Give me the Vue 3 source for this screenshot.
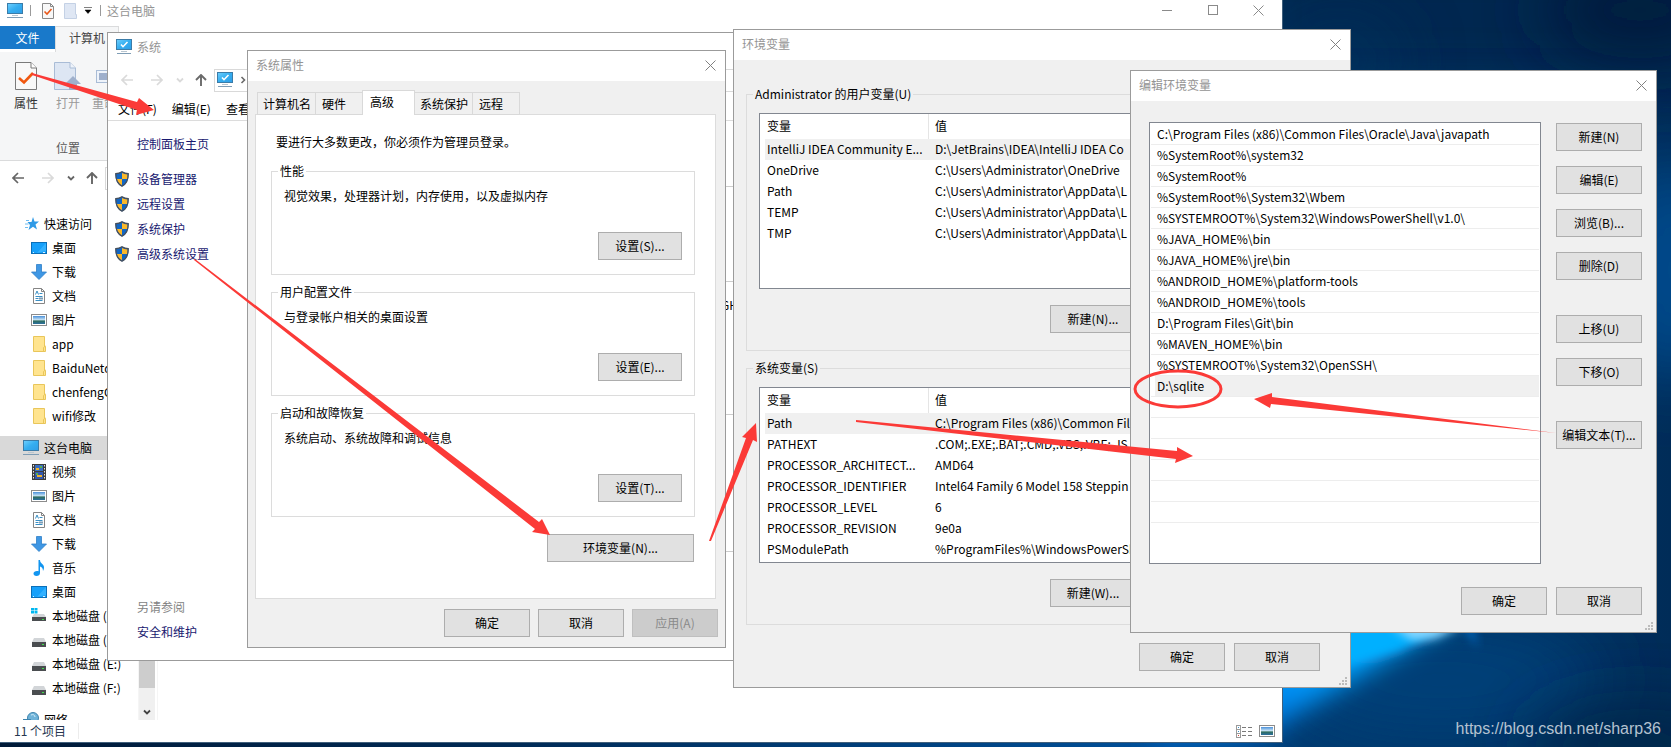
<!-- Desktop with the windows to walk through for adding a folder to Path -->
<script setup>
import { ref } from 'vue'

const quickAccess = [
  { icon: 'desktop', label: '桌面' },
  { icon: 'download', label: '下载' },
  { icon: 'doc', label: '文档' },
  { icon: 'picture', label: '图片' },
  { icon: 'folder', label: 'app' },
  { icon: 'folder', label: 'BaiduNetdisk' },
  { icon: 'folder', label: 'chenfengCode' },
  { icon: 'folder', label: 'wifi修改' },
]

const thisPc = [
  { icon: 'video', label: '视频' },
  { icon: 'picture', label: '图片' },
  { icon: 'doc', label: '文档' },
  { icon: 'download', label: '下载' },
  { icon: 'music', label: '音乐' },
  { icon: 'desktop', label: '桌面' },
  { icon: 'osdisk', label: '本地磁盘 (C:)' },
  { icon: 'disk', label: '本地磁盘 (D:)' },
  { icon: 'disk', label: '本地磁盘 (E:)' },
  { icon: 'disk', label: '本地磁盘 (F:)' },
]

const systemLinks = ['设备管理器', '远程设置', '系统保护', '高级系统设置']

const tabs = ['计算机名', '硬件', '高级', '系统保护', '远程']
const activeTab = ref('高级')

const propertyGroups = [
  { title: '性能', text: '视觉效果，处理器计划，内存使用，以及虚拟内存', button: '设置(S)...' },
  { title: '用户配置文件', text: '与登录帐户相关的桌面设置', button: '设置(E)...' },
  { title: '启动和故障恢复', text: '系统启动、系统故障和调试信息', button: '设置(T)...' },
]

const variableGroups = ref([
  {
    title: 'Administrator 的用户变量(U)',
    selected: 0,
    rows: [
      ['IntelliJ IDEA Community E...', 'D:\\JetBrains\\IDEA\\IntelliJ IDEA Co'],
      ['OneDrive', 'C:\\Users\\Administrator\\OneDrive'],
      ['Path', 'C:\\Users\\Administrator\\AppData\\L'],
      ['TEMP', 'C:\\Users\\Administrator\\AppData\\L'],
      ['TMP', 'C:\\Users\\Administrator\\AppData\\L'],
    ],
    buttons: ['新建(N)...', '编辑(E)...', '删除(D)'],
  },
  {
    title: '系统变量(S)',
    selected: 0,
    rows: [
      ['Path', 'C:\\Program Files (x86)\\Common Fil'],
      ['PATHEXT', '.COM;.EXE;.BAT;.CMD;.VBS;.VBE;.JS'],
      ['PROCESSOR_ARCHITECT...', 'AMD64'],
      ['PROCESSOR_IDENTIFIER', 'Intel64 Family 6 Model 158 Steppin'],
      ['PROCESSOR_LEVEL', '6'],
      ['PROCESSOR_REVISION', '9e0a'],
      ['PSModulePath', '%ProgramFiles%\\WindowsPowerSh'],
    ],
    buttons: ['新建(W)...', '编辑(I)...', '删除(L)'],
  },
])

const paths = [
  'C:\\Program Files (x86)\\Common Files\\Oracle\\Java\\javapath',
  '%SystemRoot%\\system32',
  '%SystemRoot%',
  '%SystemRoot%\\System32\\Wbem',
  '%SYSTEMROOT%\\System32\\WindowsPowerShell\\v1.0\\',
  '%JAVA_HOME%\\bin',
  '%JAVA_HOME%\\jre\\bin',
  '%ANDROID_HOME%\\platform-tools',
  '%ANDROID_HOME%\\tools',
  'D:\\Program Files\\Git\\bin',
  '%MAVEN_HOME%\\bin',
  '%SYSTEMROOT%\\System32\\OpenSSH\\',
  'D:\\sqlite',
  '', '', '', '', '', '', '',
]
const selectedPath = ref(12)

const pathButtons = [
  ['新建(N)', '编辑(E)', '浏览(B)...', '删除(D)'],
  ['上移(U)', '下移(O)'],
  ['编辑文本(T)...'],
]
</script>

<template>
  <main class="desktop">
    <svg class="wallpaper" viewBox="0 0 1671 747" preserveAspectRatio="none" aria-hidden="true">
      <defs>
        <linearGradient id="night" x1="0" x2="1" y1="0" y2="0">
          <stop offset="0" stop-color="#001a38" />
          <stop offset=".3" stop-color="#002a55" />
          <stop offset=".7" stop-color="#00509a" />
          <stop offset=".78" stop-color="#003a70" />
          <stop offset="1" stop-color="#002c58" />
        </linearGradient>
        <linearGradient id="beam" x1="1" x2="0" y1="0" y2="1">
          <stop offset="0" stop-color="#27b4ff" />
          <stop offset=".45" stop-color="#00a0ff" />
          <stop offset=".75" stop-color="#0078e0" />
          <stop offset="1" stop-color="#0058ac" />
        </linearGradient>
        <filter id="soft" x="-20%" y="-40%" width="140%" height="180%">
          <feGaussianBlur stdDeviation="13" />
        </filter>
        <filter id="softer" x="-60%" y="-80%" width="220%" height="260%">
          <feGaussianBlur stdDeviation="34" />
        </filter>
        <filter id="tight" x="-40%" y="-60%" width="180%" height="220%">
          <feGaussianBlur stdDeviation="5" />
        </filter>
      </defs>
      <rect width="1671" height="747" fill="url(#night)" />
      <rect x="1240" y="-60" width="500" height="150" fill="#00284f" filter="url(#softer)" />
      <ellipse cx="1340" cy="60" rx="60" ry="40" fill="#003462" opacity=".6" filter="url(#softer)" />
      <ellipse cx="1640" cy="10" rx="100" ry="50" fill="#001d3c" filter="url(#softer)" />
      <ellipse cx="1671" cy="270" rx="70" ry="110" fill="#00488a" filter="url(#softer)" />
      <ellipse cx="1440" cy="680" rx="160" ry="60" fill="#004078" filter="url(#softer)" />
      <ellipse cx="1640" cy="747" rx="110" ry="40" fill="#00254a" filter="url(#softer)" />
      <polygon points="1460,614 1200,600 1150,747 1262,735" fill="url(#beam)" filter="url(#soft)" />
      <polygon points="1465,615 1300,615 1320,672 1400,650" fill="#00b0ff" filter="url(#tight)" />
      <polygon points="1462,626 1390,626 1412,640 1436,638" fill="#8fd8ff" filter="url(#tight)" />
      <polygon points="1464,626 1472,626 1478,648" fill="#0a7ade" filter="url(#tight)" />
    </svg>

    <svg class="symbols" width="0" height="0" aria-hidden="true">
      <defs>
        <linearGradient id="screen" x1="0" x2="1" y1="0" y2="1">
          <stop offset="0" stop-color="#6fd0ff" />
          <stop offset=".5" stop-color="#35aef0" />
          <stop offset="1" stop-color="#2f9de6" />
        </linearGradient>
        <linearGradient id="sea" x1="0" x2="0" y1="0" y2="1">
          <stop offset="0" stop-color="#4a90d9" />
          <stop offset=".5" stop-color="#cfe8f7" />
          <stop offset=".6" stop-color="#2f6d5c" />
          <stop offset="1" stop-color="#2c6fa0" />
        </linearGradient>
      </defs>
      <symbol id="monitor" viewBox="0 0 16 16">
        <rect x=".5" y=".5" width="15" height="10" fill="url(#screen)" stroke="#3b7ca8" />
        <path d="M5 12.500h6" stroke="#b9c6d0" />
        <path d="M0 14.500h16" stroke="#7f9db5" />
      </symbol>
      <symbol id="monitor-check" viewBox="0 0 16 16">
        <rect x=".5" y=".5" width="15" height="10" fill="url(#screen)" stroke="#3b7ca8" />
        <path d="M5 5.500l2 2.200L11.500 3" fill="none" stroke="#fff" stroke-width="1.600" />
        <path d="M5 12.500h6" stroke="#b9c6d0" />
        <path d="M1 14.500h14" stroke="#7f9db5" />
      </symbol>
      <symbol id="page-check" viewBox="0 0 22 28">
        <path d="M.5.5H16l5.500 5.500v21.500H.5z" fill="#f8f8f8" stroke="#7a7a7a" />
        <path d="M16 .5V6h5.500" fill="#fff" stroke="#7a7a7a" />
        <path d="M4 16l5 4.500L18 11" fill="none" stroke="#f0570f" stroke-width="2.600" />
      </symbol>
      <symbol id="page-check-small" viewBox="0 0 12 16">
        <path d="M.5.500h8l3 3v12H.5z" fill="#f8f8f8" stroke="#8a8a8a" />
        <path d="M8.500.500v3h3" fill="none" stroke="#8a8a8a" />
        <path d="M2.500 8.500L5 11l4.500-5" fill="none" stroke="#e8581a" stroke-width="1.600" />
      </symbol>
      <symbol id="page-open" viewBox="0 0 28 28">
        <path d="M.5.5H16l5.500 5.500v21.500H.5z" fill="#dde6f3" stroke="#a9bcd6" />
        <path d="M16 .5V6h5.500" fill="#eef3fa" stroke="#a9bcd6" />
        <path d="M19 14l8 8h-4v6h-8v-6h-4z" fill="#9fb0cc" />
      </symbol>
      <symbol id="rename" viewBox="0 0 28 28">
        <rect x=".5" y="8.500" width="27" height="12" fill="#eef3fa" stroke="#a9bcd6" />
        <rect x="3" y="11" width="14" height="7" fill="#9fb0cc" />
      </symbol>
      <symbol id="page-new" viewBox="0 0 13 16">
        <path d="M.5.5h11v11h1v4H.5z" fill="#dfe7f4" stroke="#c4d1e5" />
      </symbol>
      <symbol id="arrow-left" viewBox="0 0 12 12">
        <path d="M12 6H1M6 1L1 6l5 5" fill="none" stroke="currentColor" stroke-width="1.700" />
      </symbol>
      <symbol id="arrow-right" viewBox="0 0 12 12">
        <path d="M0 6h11M6 1l5 5-5 5" fill="none" stroke="currentColor" stroke-width="1.700" />
      </symbol>
      <symbol id="arrow-up" viewBox="0 0 12 12">
        <path d="M6 12V1M1 6l5-5 5 5" fill="none" stroke="currentColor" stroke-width="1.900" />
      </symbol>
      <symbol id="chevron-down" viewBox="0 0 8 8">
        <path d="M1 2.500l3 3 3-3" fill="none" stroke="currentColor" stroke-width="1.800" />
      </symbol>
      <symbol id="chevron-right" viewBox="0 0 8 8">
        <path d="M2.500 1l3 3-3 3" fill="none" stroke="currentColor" stroke-width="1.600" />
      </symbol>
      <symbol id="close" viewBox="0 0 11 11">
        <path d="M.5.5l10 10M10.500.5l-10 10" fill="none" stroke="currentColor" />
      </symbol>
      <symbol id="star" viewBox="0 0 14 14">
        <path d="M8 0l1.500 4.500H14l-3.500 3L12 12.500 8 9.800 3.500 13 5 8 2.500 5h4z" fill="#2f9ae6" />
        <path d="M1 3.500h3M0 7h3.500M0 10.500h3" stroke="#6fbcf0" />
      </symbol>
      <symbol id="desktop" viewBox="0 0 16 16">
        <rect x=".5" y="2.500" width="15" height="11" fill="#16a0fa" stroke="#0b6fb8" />
        <path d="M15 3v8L6 13z" fill="#33b1ff" />
        <path d="M2 12.500h1M12 12.500h2" stroke="#d4efff" />
      </symbol>
      <symbol id="download" viewBox="0 0 16 16">
        <path d="M5.500.5h5V8h5L8 15.500.5 8h5z" fill="#3f97e4" stroke="#2f7fc8" stroke-width=".8" />
      </symbol>
      <symbol id="doc" viewBox="0 0 16 16">
        <path d="M2.500.5h8l3 3v12h-11z" fill="#fff" stroke="#858585" />
        <path d="M10.500.5v3h3" fill="none" stroke="#858585" />
        <path d="M4.500 6.500l1.500-3.500 1.500 3.500M8.500 5.500h3M4.500 8.500h7M4.500 10.500h3M4.500 12.500h7" fill="none" stroke="#3a8fc4" />
        <rect x="8" y="9.500" width="4" height="2" fill="#7f9db5" />
      </symbol>
      <symbol id="picture" viewBox="0 0 16 16">
        <rect x=".5" y="2.500" width="15" height="11" fill="#fff" stroke="#8c8c8c" />
        <rect x="2" y="4" width="12" height="8" fill="url(#sea)" />
      </symbol>
      <symbol id="folder" viewBox="0 0 16 16">
        <path d="M2.500.5h11v10h1v5h-12z" fill="#ffe48f" stroke="#e9c65a" />
        <path d="M12.500 15.500v-4l2-1.500" fill="none" stroke="#e9c65a" />
      </symbol>
      <symbol id="video" viewBox="0 0 16 16">
        <rect x="1" y="0" width="14" height="16" fill="#3d3d3d" />
        <path d="M2.500 1v15M13.500 1v15" stroke="#e8e8e8" stroke-dasharray="1.500 1.500" />
        <rect x="4" y="1" width="8" height="6" fill="#3a6fc0" />
        <rect x="4" y="8" width="8" height="7" fill="#3358b0" />
        <path d="M5 5h3M6 12h5" stroke="#f0b429" stroke-width="2" />
        <path d="M9 3h2M5 10h2" stroke="#59b04c" stroke-width="2" />
      </symbol>
      <symbol id="music" viewBox="0 0 16 16">
        <path d="M7.500 0h1.500c0 3.500 4 4 4 7.500 0 1.500-.5 2.500-1 3.500 0-3-1.500-4-3-4.500V13c0 1.700-1.500 3-3.500 3S2.500 15 2.500 13.500 4 11 6 11c.600 0 1 0 1.500.300z" fill="#1295f0" />
      </symbol>
      <symbol id="disk" viewBox="0 0 16 16">
        <path d="M3 6h10l2 4H1z" fill="#d2d5d8" />
        <rect x="1" y="10" width="14" height="5" fill="#4a4d50" />
        <rect x="11" y="12" width="2" height="1" fill="#3fe04a" />
      </symbol>
      <symbol id="osdisk" viewBox="0 0 16 16">
        <path d="M0 0h3v2.500H0zM3.500 0h3v2.500h-3zM0 3h3v2.500H0zM3.500 3h3v2.500h-3z" fill="#00b7f0" />
        <path d="M3 6h10l2 3H1z" fill="#d2d5d8" />
        <rect x="1" y="9" width="14" height="4" fill="#4a4d50" />
        <rect x="11" y="11" width="2" height="1" fill="#3fe04a" />
      </symbol>
      <symbol id="network" viewBox="0 0 16 16">
        <circle cx="10" cy="6" r="5.500" fill="#6fb3d9" stroke="#3f84ad" />
        <path d="M8 3c2-1 4 0 4 2" fill="none" stroke="#d5edf8" />
        <path d="M0 7h8v6H0z" fill="#3f84ad" />
      </symbol>
      <symbol id="shield" viewBox="0 0 14 16">
        <path d="M7 .5c2 1.300 4 1.900 6.500 2C13.500 9 12 13 7 15.500 2 13 .5 9 .5 2.500 3 2.400 5 1.800 7 .5z" fill="#2b5fa8" />
        <path d="M7 2v6H1.800C1.500 6.500 1.500 5 1.500 3.500 3.500 3.300 5.300 2.900 7 2z" fill="#1166c4" />
        <path d="M7 2c1.700.9 3.500 1.300 5.500 1.500 0 1.500 0 3-.3 4.500H7z" fill="#fbb829" />
        <path d="M1.800 8H7v6.300C4 12.700 2.400 10.600 1.800 8z" fill="#fbb829" />
        <path d="M7 8h5.200c-.6 2.600-2.200 4.700-5.200 6.300z" fill="#1166c4" />
        <path d="M7 .8c2 1.200 4 1.800 6.300 1.900C13.300 9 11.800 12.800 7 15.200 2.200 12.800.7 9 .7 2.700 3 2.600 5 2 7 .8z" fill="none" stroke="#46505c" stroke-width="1.200" />
      </symbol>
      <symbol id="details" viewBox="0 0 16 13">
        <rect x=".5" y=".5" width="4" height="12" fill="#fff" stroke="#9a9a9a" />
        <path d="M1 4.500h3M1 8.500h3" stroke="#9a9a9a" />
        <path d="M2 2.500h1" stroke="#3a8fc4" />
        <path d="M2 6.500h1" stroke="#3a8fc4" />
        <path d="M2 10.500h1" stroke="#d04a3a" />
        <path d="M6 2.500h4M12 2.500h4M6 6.500h4M12 6.500h4M6 10.500h4M12 10.500h4" stroke="#7a7a7a" />
      </symbol>
      <symbol id="grip" viewBox="0 0 8 8">
        <path d="M6 0h2v2H6zM3 3h2v2H3zM6 3h2v2H6zM0 6h2v2H0zM3 6h2v2H3zM6 6h2v2H6z" fill="#bcbcbc" />
      </symbol>
    </svg>

    <!-- file explorer -->
    <section class="window explorer">
      <header class="explorer-title">
        <svg class="i16"><use href="#monitor" /></svg>
        <i class="bar first"></i>
        <svg class="page"><use href="#page-check-small" /></svg>
        <svg class="new-page"><use href="#page-new" /></svg>
        <svg class="caret" viewBox="0 0 8 7"><path d="M0 .5h8M1 3h6L4 6.500z" stroke="#000" stroke-width=".5" /></svg>
        <i class="bar"></i>
        <span class="caption">这台电脑</span>
        <div class="window-controls">
          <button type="button" aria-label="最小化">
            <svg class="i11" viewBox="0 0 11 11"><path d="M1 5.500h10" stroke="currentColor" /></svg>
          </button>
          <button type="button" aria-label="最大化">
            <svg class="i11" viewBox="0 0 11 11"><rect x="1.500" y=".5" width="9" height="9" fill="none" stroke="currentColor" /></svg>
          </button>
          <button type="button" aria-label="关闭">
            <svg class="i11"><use href="#close" /></svg>
          </button>
        </div>
      </header>
      <nav class="ribbon-tabs">
        <button type="button" class="file-tab">文件</button>
        <button type="button" class="computer-tab">计算机</button>
      </nav>
      <div class="ribbon">
        <div class="ribbon-group">
          <div class="ribbon-buttons">
            <button type="button"><svg class="big"><use href="#page-check" /></svg>属性</button>
            <button type="button" disabled><svg class="big wide"><use href="#page-open" /></svg>打开</button>
            <button type="button" disabled><svg class="big wide"><use href="#rename" /></svg>重命名</button>
          </div>
          <span class="group-name">位置</span>
        </div>
      </div>
      <div class="explorer-nav">
        <svg class="i12"><use href="#arrow-left" /></svg>
        <svg class="i12 faded"><use href="#arrow-right" /></svg>
        <svg class="i8"><use href="#chevron-down" /></svg>
        <svg class="i12"><use href="#arrow-up" /></svg>
        <div class="address"></div>
      </div>
      <div class="explorer-body">
        <ul class="tree">
          <li class="root"><svg class="i14"><use href="#star" /></svg>快速访问</li>
          <li v-for="item in quickAccess" :key="item.label">
            <svg class="i16"><use :href="'#' + item.icon" /></svg>{{ item.label }}
          </li>
          <li class="root spaced current"><svg class="i16"><use href="#monitor" /></svg>这台电脑</li>
          <li v-for="item in thisPc" :key="item.label">
            <svg class="i16"><use :href="'#' + item.icon" /></svg>{{ item.label }}
          </li>
          <li class="root spaced"><svg class="i16"><use href="#network" /></svg>网络</li>
        </ul>
        <div class="scrollbar">
          <div class="thumb"></div>
          <svg class="i8"><use href="#chevron-down" /></svg>
        </div>
      </div>
      <footer class="status">
        <span class="count">11 个项目</span>
        <svg class="details"><use href="#details" /></svg>
        <svg class="i16"><use href="#picture" /></svg>
      </footer>
    </section>

    <!-- control panel: system -->
    <section class="window system">
      <header class="title-bar with-icon">
        <svg class="i16"><use href="#monitor-check" /></svg>
        <span class="caption">系统</span>
      </header>
      <div class="system-nav">
        <svg class="i12 faded"><use href="#arrow-left" /></svg>
        <svg class="i12 faded"><use href="#arrow-right" /></svg>
        <svg class="i8 faded"><use href="#chevron-down" /></svg>
        <svg class="i12"><use href="#arrow-up" /></svg>
        <div class="address">
          <svg class="i16"><use href="#monitor-check" /></svg>
          <svg class="i8"><use href="#chevron-right" /></svg>
        </div>
      </div>
      <nav class="menu">
        <button type="button">文件(F)</button>
        <button type="button">编辑(E)</button>
        <button type="button">查看(V)</button>
      </nav>
      <div class="system-body">
        <aside>
          <a class="home" href="#">控制面板主页</a>
          <a v-for="link in systemLinks" :key="link" href="#">
            <svg class="shield"><use href="#shield" /></svg>{{ link }}
          </a>
          <span class="see-also">另请参阅</span>
          <a class="home" href="#">安全和维护</a>
        </aside>
        <div class="system-info">
          <div class="info-head"></div>
          <div class="info-edition"></div>
          <div class="info-cpu">GHz</div>
          <div class="info-name"></div>
        </div>
      </div>
    </section>

    <!-- system properties -->
    <section class="window properties">
      <header class="title-bar">
        <span class="caption">系统属性</span>
        <button type="button" class="close" aria-label="关闭"><svg class="i11"><use href="#close" /></svg></button>
      </header>
      <div class="properties-body">
        <nav class="tabs">
          <button
            v-for="tab in tabs"
            :key="tab"
            type="button"
            :class="['tab', activeTab === tab ? 'active' : '', tab.length > 2 ? 'long' : '']"
            @click="activeTab = tab"
          >
            {{ tab }}
          </button>
        </nav>
        <div class="panel">
          <p>要进行大多数更改，你必须作为管理员登录。</p>
          <fieldset v-for="group in propertyGroups" :key="group.title">
            <legend>{{ group.title }}</legend>
            <p>{{ group.text }}</p>
            <button type="button" class="btn">{{ group.button }}</button>
          </fieldset>
          <button type="button" class="btn env-button">环境变量(N)...</button>
        </div>
        <div class="actions">
          <button type="button" class="btn">确定</button>
          <button type="button" class="btn">取消</button>
          <button type="button" class="btn" disabled>应用(A)</button>
        </div>
      </div>
    </section>

    <!-- environment variables -->
    <section class="window variables">
      <header class="title-bar">
        <span class="caption">环境变量</span>
        <button type="button" class="close" aria-label="关闭"><svg class="i11"><use href="#close" /></svg></button>
      </header>
      <div class="variables-body">
        <fieldset v-for="group in variableGroups" :key="group.title">
          <legend>{{ group.title }}</legend>
          <div class="table-box">
            <table>
              <thead>
                <tr><th class="name">变量</th><th>值</th></tr>
              </thead>
              <tbody>
                <tr
                  v-for="(row, i) in group.rows"
                  :key="row[0]"
                  :class="{ selected: group.selected === i }"
                  @click="group.selected = i"
                >
                  <td class="name">{{ row[0] }}</td>
                  <td>{{ row[1] }}</td>
                </tr>
              </tbody>
            </table>
          </div>
          <div class="actions">
            <button v-for="label in group.buttons" :key="label" type="button" class="btn">{{ label }}</button>
          </div>
        </fieldset>
        <div class="actions">
          <button type="button" class="btn">确定</button>
          <button type="button" class="btn">取消</button>
        </div>
      </div>
      <svg class="grip"><use href="#grip" /></svg>
    </section>

    <!-- edit Path -->
    <section class="window edit">
      <header class="title-bar">
        <span class="caption">编辑环境变量</span>
        <button type="button" class="close" aria-label="关闭"><svg class="i11"><use href="#close" /></svg></button>
      </header>
      <div class="edit-body">
        <ul class="paths">
          <li v-for="(path, i) in paths" :key="i" :class="{ selected: selectedPath === i }" @click="selectedPath = i">
            <span>{{ path }}</span>
          </li>
        </ul>
        <div class="side">
          <div v-for="(set, i) in pathButtons" :key="i" class="side-set">
            <button v-for="label in set" :key="label" type="button" class="btn">{{ label }}</button>
          </div>
        </div>
      </div>
      <div class="actions">
        <button type="button" class="btn">确定</button>
        <button type="button" class="btn">取消</button>
      </div>
      <svg class="grip"><use href="#grip" /></svg>
    </section>

    <!-- red arrows between the steps -->
    <svg class="marks" aria-hidden="true">
      <g fill="#fb3a37">
        <polygon points="32,73 137,102 139,98 154,110 136,115 137,110 32,75" />
        <polygon points="195,259 539,522 542,519 550,535 532,532 535,529 194,260" />
        <polygon points="709,541 746,438 742,437 756,423 757,442 753,440 711,541" />
        <polygon points="856,420 1177,451 1177,447 1193,456 1175,463 1176,459 856,422" />
        <polygon points="1556,433 1272,397 1272,393 1254,399 1270,408 1271,404" />
      </g>
      <ellipse cx="1178" cy="389" rx="43" ry="18" fill="none" stroke="#fb3a37" stroke-width="3" />
    </svg>

    <span class="watermark">https://blog.csdn.net/sharp36</span>
  </main>
</template>

<style>
body {
  background: #002850;
}
</style>

<style scoped>
.desktop {
  position: relative;
  min-height: 100vh;
  overflow: hidden;
  font: 12px/16px "Noto Sans CJK SC", sans-serif;
  color: #000;
}

.wallpaper,
.marks {
  position: absolute;
  inset: 0;
  width: 100%;
  height: 100%;
}

.marks {
  pointer-events: none;
}

.symbols {
  position: absolute;
}

ul,
p {
  margin: 0;
  padding: 0;
  list-style: none;
}

svg {
  flex: none;
}

button {
  padding: 0;
  border: none;
  background: none;
  font: inherit;
  color: inherit;
  white-space: nowrap;
}

.i8 { width: 8px; height: 8px; }
.i11 { width: 11px; height: 11px; }
.i12 { width: 12px; height: 12px; }
.i14 { width: 14px; height: 14px; }
.i16 { width: 16px; height: 16px; }

.faded {
  color: #dadada;
}

/* windows lie freely on the desktop */
.window {
  position: absolute;
  box-sizing: border-box;
  display: flex;
  flex-direction: column;
  border: 1px solid #9b9b9b;
  background: #fff;
}

.title-bar {
  box-sizing: border-box;
  display: flex;
  align-items: center;
  justify-content: space-between;
  height: 30px;
  padding: 0 9px 2px 8px;
  background: #fff;
}

.caption {
  color: #949494;
}

.title-bar.with-icon {
  justify-content: flex-start;
  gap: 5px;
}

.close {
  display: flex;
  color: #808080;
}

.btn {
  box-sizing: border-box;
  width: 86px;
  height: 28px;
  padding-bottom: 1px;
  border: 1px solid #adadad;
  background: #e1e1e1;
}

.btn[disabled] {
  border-color: #bfbfbf;
  background: #ccc;
  color: #8a8a8a;
}

.actions {
  display: flex;
  justify-content: flex-end;
  gap: 9px;
}

fieldset {
  margin: 0;
  min-width: 0;
  border: 1px solid #dcdcdc;
}

legend {
  margin-left: -6px;
  padding: 0 2px;
}

.grip {
  position: absolute;
  right: 3px;
  bottom: 2px;
  width: 8px;
  height: 8px;
}

/* explorer */
.explorer {
  inset: 0 auto 4px 0;
  width: 1283px;
  border-width: 0 1px 1px 0;
  border-color: #41607c;
}

.explorer-title {
  display: flex;
  align-items: center;
  height: 21px;
  padding: 0 18px 5px 7px;
}

.bar {
  width: 1px;
  height: 11px;
  margin: 0 6px 0 8px;
  background: #9a9a9a;
}

.bar.first {
  margin: 0 11px 0 7px;
}

.page { width: 12px; height: 16px; }
.new-page { width: 13px; height: 16px; margin: 0 7px 0 10px; }
.caret { width: 8px; height: 7px; }

.window-controls {
  display: flex;
  gap: 35px;
  margin-left: auto;
  color: #8a8a8a;
}

.window-controls button {
  display: flex;
}

.ribbon-tabs {
  display: flex;
  align-items: flex-start;
  height: 26px;
}

.file-tab {
  width: 55px;
  height: 23px;
  background: #1979ca;
  color: #fff;
}

.computer-tab {
  box-sizing: border-box;
  width: 64px;
  height: 26px;
  padding-bottom: 3px;
  border: 1px solid #dadbdc;
  border-bottom: none;
  background: #f5f6f7;
  color: #444;
}

.ribbon {
  display: flex;
  height: 108px;
  border-bottom: 1px solid #dadbdc;
  background: #f5f6f7;
}

.ribbon-group {
  display: flex;
  flex-direction: column;
  align-items: center;
  justify-content: space-between;
  padding: 10px 4px 4px 5px;
}

.ribbon-buttons {
  display: flex;
}

.ribbon-buttons button {
  display: flex;
  flex-direction: column;
  align-items: center;
  gap: 5px;
  width: 42px;
  color: #333;
}

.ribbon-buttons button[disabled] {
  color: #9a9a9a;
}

.big { width: 22px; height: 28px; }
.big.wide { width: 28px; }

.group-name {
  color: #5a5a5a;
}

.explorer-nav {
  display: flex;
  align-items: center;
  height: 34px;
  padding-left: 12px;
  color: #666;
}

.explorer-nav .i12 + .i12 { margin-left: 18px; }
.explorer-nav .i8 { margin: 0 11px 0 13px; }

.address {
  display: flex;
  align-items: center;
  gap: 6px;
  flex: 1;
  box-sizing: border-box;
  height: 23px;
  margin-left: 7px;
  padding-left: 2px;
  border: 1px solid #d9d9d9;
}

.explorer-body {
  display: flex;
  flex: 1;
  min-height: 0;
  overflow: hidden;
}

.tree {
  width: 139px;
  height: 525px;
  padding-top: 17px;
}

.tree li {
  display: flex;
  align-items: center;
  gap: 5px;
  height: 24px;
  padding-left: 31px;
  white-space: nowrap;
}

.tree .root {
  padding-left: 23px;
}

.tree .root .i14 {
  margin-left: 2px;
}

.tree .spaced {
  margin-top: 8px;
}

.tree .current {
  background: #d9d9d9;
}

.scrollbar {
  display: flex;
  flex-direction: column;
  align-items: center;
  justify-content: space-between;
  width: 16px;
  padding-bottom: 4px;
  border-right: 2px solid #fff;
  outline: 1px solid #f5f5f5;
  background: #f0f0f0;
  color: #444;
}

.thumb {
  align-self: stretch;
  height: 493px;
  background: #cdcdcd;
}

.status {
  display: flex;
  align-items: center;
  gap: 7px;
  height: 22px;
  padding: 0 7px 0 14px;
  color: #26364f;
}

.count {
  margin-right: auto;
  padding-right: 12px;
  border-right: 1px solid #ececec;
}

.details {
  width: 16px;
  height: 13px;
}

/* system */
.system {
  left: 107px;
  top: 32px;
  width: 860px;
  height: 629px;
}

.system-nav {
  display: flex;
  align-items: center;
  height: 34px;
  padding-left: 13px;
  color: #6a6a6a;
}

.system-nav .i12 + .i12 { margin-left: 18px; }
.system-nav > .i8 { margin: 0 11px 0 13px; }
.system-nav .address { margin-left: 7px; }

.menu {
  display: flex;
  align-items: center;
  gap: 15px;
  height: 23px;
  padding-left: 10px;
  border-bottom: 1px solid #dcdcdc;
}

.system-body {
  display: flex;
  flex: 1;
}

aside {
  box-sizing: border-box;
  display: flex;
  flex-direction: column;
  width: 200px;
  padding: 10px 0 16px 7px;
}

aside a,
.see-also {
  display: flex;
  align-items: center;
  gap: 8px;
  height: 25px;
  color: #191970;
  text-decoration: none;
}

aside .home,
.see-also {
  padding-left: 22px;
}

aside .home:first-child {
  margin-bottom: 10px;
}

.see-also {
  margin-top: auto;
  color: #838383;
}

.shield {
  width: 14px;
  height: 16px;
}

.system-info {
  flex: 1;
}

.system-info > div {
  box-sizing: border-box;
  border-bottom: 1px solid #ccc;
}

.info-head { height: 66px; }
.info-edition { height: 95px; }
.info-cpu { height: 133px; padding: 15px 0 0 413px; }
.info-name { height: 137px; }

/* system properties */
.properties {
  left: 247px;
  top: 50px;
  width: 479px;
}

.properties-body {
  padding: 9px 7px 10px;
  background: #f0f0f0;
}

.tabs {
  display: flex;
  align-items: flex-end;
  height: 25px;
  padding-left: 2px;
}

.tab {
  box-sizing: border-box;
  width: 48px;
  height: 23px;
  margin-right: -1px;
  padding-left: 6px;
  border: 1px solid #d9d9d9;
  background: #f0f0f0;
  text-align: left;
}

.tab.long {
  width: 59px;
  padding-left: 5px;
}

.tab.active {
  position: relative;
  z-index: 1;
  width: 53px;
  height: 25px;
  padding: 0 0 3px 7px;
  border-bottom: none;
  background: #fff;
}

.panel {
  display: flex;
  flex-direction: column;
  gap: 9px;
  margin: -1px 2px 0 0;
  padding: 19px 20px 36px 15px;
  border: 1px solid #dcdcdc;
  background: #fff;
}

.panel > p {
  margin: 0 0 4px 5px;
}

.panel fieldset {
  display: flex;
  flex-direction: column;
  gap: 28px;
  padding: 9px 12px 14px;
}

.panel fieldset .btn {
  align-self: flex-end;
  width: 84px;
}

.env-button {
  align-self: flex-end;
  width: 147px;
  margin: 8px 1px 0 0;
}

.properties .actions {
  gap: 8px;
  margin-top: 10px;
}

/* environment variables */
.variables {
  left: 733px;
  top: 29px;
  width: 618px;
}

.variables-body {
  display: flex;
  flex-direction: column;
  gap: 9px;
  padding: 26px 12px 16px;
  background: #f0f0f0;
}

.variables fieldset {
  padding: 11px 11px 17px 12px;
}

.variables fieldset .actions {
  margin-top: 16px;
}

.variables-body > .actions {
  margin: 9px 18px 0 0;
}

.table-box {
  height: 174px;
  padding-left: 5px;
  overflow: hidden;
  border: 1px solid #828790;
  background: #fff;
}

table {
  width: 100%;
  table-layout: fixed;
  border-collapse: separate;
  border-spacing: 0;
}

th,
td {
  box-sizing: border-box;
  height: 21px;
  padding: 0 6px 2px;
  overflow: hidden;
  font-weight: 400;
  text-align: left;
  white-space: nowrap;
}

th {
  height: 25px;
}

.name {
  width: 164px;
  padding: 0 0 2px 2px;
}

th.name {
  border-right: 1px solid #e5e5e5;
}

tr.selected {
  background: #f0f0f0;
}

/* edit */
.edit {
  left: 1130px;
  top: 70px;
  width: 527px;
  padding-bottom: 17px;
  background: #f0f0f0;
}

.edit-body {
  display: flex;
  gap: 15px;
  padding: 21px 14px 23px 18px;
}

.paths {
  box-sizing: border-box;
  flex: 1;
  height: 442px;
  padding: 1px;
  overflow: hidden;
  border: 1px solid #828790;
  background: #fff;
}

.paths li {
  box-sizing: border-box;
  height: 21px;
  padding-left: 4px;
  border-bottom: 1px solid #ededed;
}

.paths li:last-child {
  border-bottom: none;
}

.paths span {
  display: block;
  height: 20px;
  padding-left: 2px;
  line-height: 20px;
}

.paths .selected span {
  background: #f0f0f0;
}

.side,
.side-set {
  display: flex;
  flex-direction: column;
}

.side {
  gap: 35px;
  padding-top: 1px;
}

.side-set {
  gap: 15px;
}

.edit > .actions {
  padding-right: 14px;
}

.watermark {
  position: absolute;
  right: 10px;
  bottom: 8px;
  font: 16px/20px "Liberation Sans", Arial, sans-serif;
  color: #b4c2d0;
}
</style>
